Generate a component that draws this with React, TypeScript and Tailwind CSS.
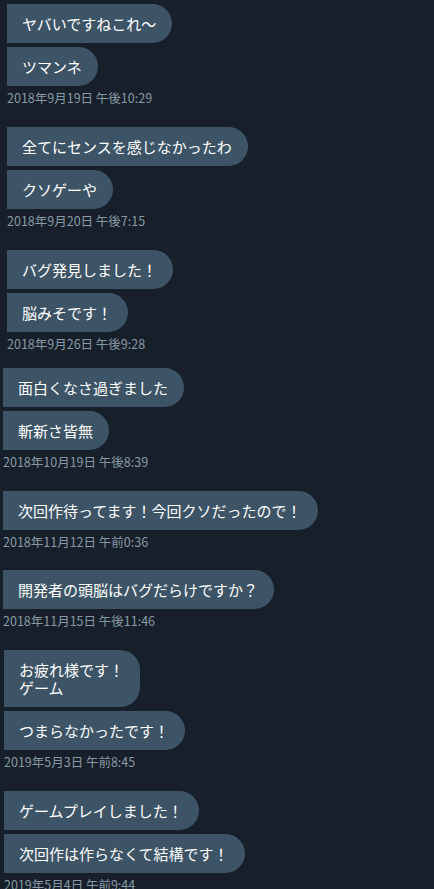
import React from 'react';

interface Group {
  messages: string[];
  time: string;
  left: string;
  top: string;
}

const groups: Group[] = [
  { messages: ['ヤバいですねこれ～', 'ツマンネ'], time: '2018年9月19日 午後10:29', left: 'ml-[7px]', top: 'mt-[4px]' },
  { messages: ['全てにセンスを感じなかったわ', 'クソゲーや'], time: '2018年9月20日 午後7:15', left: 'ml-[7px]', top: 'mt-[21px]' },
  { messages: ['バグ発見しました！', '脳みそです！'], time: '2018年9月26日 午後9:28', left: 'ml-[7px]', top: 'mt-[21px]' },
  { messages: ['面白くなさ過ぎました', '斬新さ皆無'], time: '2018年10月19日 午後8:39', left: 'ml-[3px]', top: 'mt-[16px]' },
  { messages: ['次回作待ってます！今回クソだったので！'], time: '2018年11月12日 午前0:36', left: 'ml-[3px]', top: 'mt-[21px]' },
  { messages: ['開発者の頭脳はバグだらけですか？'], time: '2018年11月15日 午後11:46', left: 'ml-[3px]', top: 'mt-[20px]' },
  { messages: ['お疲れ様です！\nゲーム', 'つまらなかったです！'], time: '2019年5月3日 午前8:45', left: 'ml-[4px]', top: 'mt-[21px]' },
  { messages: ['ゲームプレイしました！', '次回作は作らなくて結構です！'], time: '2019年5月4日 午前9:44', left: 'ml-[4px]', top: 'mt-[21px]' },
];

const Bubble: React.FC<{ text: string }> = ({ text }) => (
  <div className="self-start whitespace-pre-line rounded-r-[20px] bg-[#3d5466] py-[10.5px] pl-[15px] pr-[16px] text-[15px] leading-[18px] text-white">
    {text}
  </div>
);

export default function App() {
  return (
    <div
      className="h-[889px] w-[434px] overflow-hidden bg-[#17202a]"
      style={{ fontFamily: '"Noto Sans CJK JP", "Noto Sans", sans-serif' }}
    >
      {groups.map((g, i) => (
        <div key={i} className={`flex flex-col ${g.left} ${g.top}`}>
          <div className="flex flex-col gap-[4px]">
            {g.messages.map((m, j) => (
              <Bubble key={j} text={m} />
            ))}
          </div>
          <div className="mt-[4px] text-[12.5px] leading-4 text-[#8899a6]">{g.time}</div>
        </div>
      ))}
    </div>
  );
}
